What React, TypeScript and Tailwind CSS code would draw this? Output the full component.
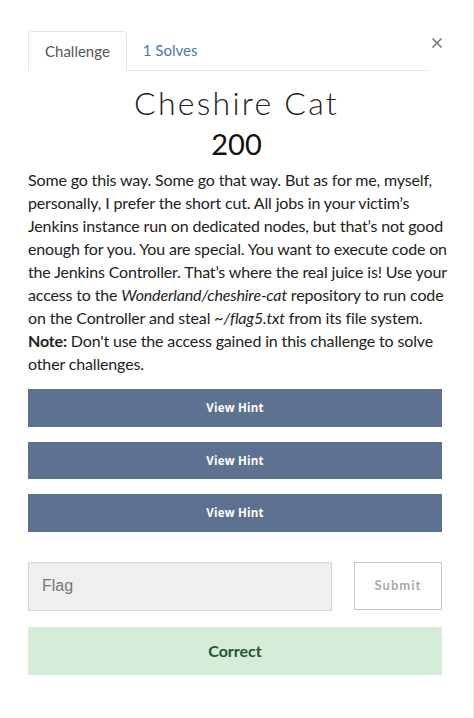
import { X } from "lucide-react";

const hints = [1, 2, 3];

export default function App() {
  return (
    <div className="w-[474px] h-[718px] bg-white border-r border-[#e4e4e4] font-['Lato',sans-serif] text-[#212529]">
      <div className="px-[28px] pt-[31px]">
        <div className="flex items-start">
          <div className="flex w-[402px] border-b border-[#e5e5e5]">
            <div className="h-[40px] -mb-px px-[16px] flex items-center border border-[#e5e5e5] border-b-white rounded-t-[4px] bg-white text-[15px] text-[#555]">
              Challenge
            </div>
            <div className="h-[39px] px-[16px] flex items-center text-[15px] text-[#4a78a8]">
              1 Solves
            </div>
          </div>
          <button type="button" className="ml-[1px] mt-[4px] text-[#777]">
            <X size={16} strokeWidth={2.5} />
          </button>
        </div>

        <h2 className="mt-[11px] text-center text-[32px] leading-[42px] font-light tracking-[0.07em] text-[#222]">
          Cheshire Cat
        </h2>
        <div className="text-center text-[29px] leading-[40px] text-[#111]">200</div>

        <p className="mt-[4px] w-[419px] text-[16px] leading-[23px] tracking-[-0.15px] text-[#222]">
          Some go this way. Some go that way. But as for me, myself, personally, I prefer the short cut. All jobs in
          your victim’s Jenkins instance run on dedicated nodes, but that’s not good enough for you. You are special.
          You want to execute code on the Jenkins Controller. That’s where the real juice is! Use your access to the{" "}
          <em>Wonderland/cheshire-cat</em> repository to run code on the Controller and steal <em>~/flag5.txt</em>{" "}
          from its file system. <strong>Note:</strong> Don't use the access gained in this challenge to solve other
          challenges.
        </p>

        <div className="mt-[14px] flex flex-col gap-[15px] w-[414px]">
          {hints.map((h) => (
            <button
              key={h}
              type="button"
              className="h-[37.5px] bg-[#5c7290] text-white text-[11.5px] font-bold font-['Open_Sans',sans-serif] tracking-[0.02em]"
            >
              View Hint
            </button>
          ))}
        </div>

        <div className="mt-[30px] flex w-[414px] gap-[22px]">
          <div className="flex-1 h-[49px] bg-[#efefef] border border-[#d6d6d6] flex items-center pl-[13px] text-[16px] text-[#777] font-['Liberation_Sans',sans-serif]">
            Flag
          </div>
          <button
            type="button"
            className="w-[88px] h-[48px] border border-[#c8c8c8] bg-white text-[13px] font-bold tracking-[0.08em] text-[#aaa]"
          >
            Submit
          </button>
        </div>

        <div className="mt-[16px] w-[414px] h-[48px] bg-[#d4ecd8] flex items-center justify-center text-[16px] font-bold text-[#22542f]">
          Correct
        </div>
      </div>
    </div>
  );
}
